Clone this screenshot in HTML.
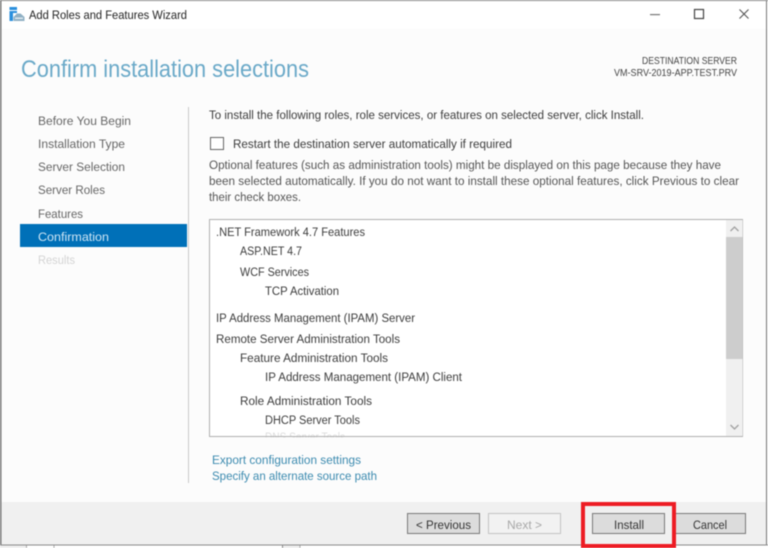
<!DOCTYPE html>
<html><head><meta charset="utf-8"><style>
html,body{margin:0;padding:0;background:#fff;width:768px;height:548px;overflow:hidden}
svg{display:block;position:absolute;left:0;top:0}
text{font-family:"Liberation Sans",sans-serif;font-size:12.3px;fill:#3c3c3c}
svg{filter:blur(.45px)}
</style></head><body>
<svg width="768" height="548" viewBox="0 0 768 548" xmlns="http://www.w3.org/2000/svg">
<rect width="768" height="548" fill="#fcfcfc"/>
<rect x="0" y="0" width="768" height="29" fill="#fff"/>
<rect x="0" y="0" width="768" height="1" fill="#8a8a8a"/>
<rect x="0" y="0" width="1.5" height="545" fill="#777"/>
<rect x="766" y="0" width="1" height="545" fill="#777"/>

<!-- title icon -->
<rect x="9.500" y="7" width="7.500" height="3" fill="#2a8fdc"/>
<rect x="9.500" y="11" width="7.500" height="2" fill="#2a8fdc"/>
<rect x="9.500" y="13" width="3.500" height="8" fill="#2a8fdc"/>
<path d="M13.500 21V17L17 13.500H20.500L24.500 17V21Z" fill="#8fb0c4"/>
<rect x="15" y="17.500" width="8" height="1.500" fill="#dfe8ee"/>
<text x="29" y="19" textLength="158" lengthAdjust="spacingAndGlyphs" style="fill:#222">Add Roles and Features Wizard</text>

<!-- window controls -->
<rect x="650" y="14" width="10" height="1.200" fill="#777"/>
<rect x="694.500" y="9.500" width="9" height="9" fill="none" stroke="#444" stroke-width="1.200"/>
<path d="M739.500 9.500L748.500 18.500M748.500 9.500L739.500 18.500" stroke="#555" stroke-width="1.100" fill="none"/>

<!-- header -->
<text x="21" y="77" textLength="288" lengthAdjust="spacingAndGlyphs" style="font-size:24px;fill:#6aa9c8">Confirm installation selections</text>
<text x="642" y="64" textLength="95" lengthAdjust="spacingAndGlyphs" style="font-size:9.800px;fill:#444">DESTINATION SERVER</text>
<text x="614" y="76" textLength="123" lengthAdjust="spacingAndGlyphs" style="font-size:9.800px;fill:#444">VM-SRV-2019-APP.TEST.PRV</text>

<!-- nav -->
<rect x="20" y="224" width="167" height="23" fill="#0070b8"/>
<text x="38" y="125" textLength="93" lengthAdjust="spacingAndGlyphs" style="fill:#666">Before You Begin</text>
<text x="38" y="148" textLength="87" lengthAdjust="spacingAndGlyphs" style="fill:#666">Installation Type</text>
<text x="38" y="171" textLength="87" lengthAdjust="spacingAndGlyphs" style="fill:#666">Server Selection</text>
<text x="38" y="194" textLength="67" lengthAdjust="spacingAndGlyphs" style="fill:#666">Server Roles</text>
<text x="38" y="218" textLength="45" lengthAdjust="spacingAndGlyphs" style="fill:#666">Features</text>
<text x="38" y="241" textLength="71" lengthAdjust="spacingAndGlyphs" style="fill:#cfe6f5">Confirmation</text>
<text x="38" y="264" textLength="37" lengthAdjust="spacingAndGlyphs" style="fill:#d4d4d4">Results</text>
<rect x="188" y="107" width="1" height="376" fill="#c8c8c8"/>

<!-- main copy -->
<text x="209" y="119" textLength="435" lengthAdjust="spacingAndGlyphs">To install the following roles, role services, or features on selected server, click Install.</text>
<rect x="210.500" y="137.500" width="13" height="12" fill="#fff" stroke="#666" stroke-width="1"/>
<text x="233" y="148" textLength="279" lengthAdjust="spacingAndGlyphs">Restart the destination server automatically if required</text>
<text x="209" y="169" textLength="512" lengthAdjust="spacingAndGlyphs" style="fill:#555">Optional features (such as administration tools) might be displayed on this page because they have</text>
<text x="209" y="185" textLength="530" lengthAdjust="spacingAndGlyphs" style="fill:#555">been selected automatically. If you do not want to install these optional features, click Previous to clear</text>
<text x="209" y="201" textLength="92" lengthAdjust="spacingAndGlyphs" style="fill:#555">their check boxes.</text>

<!-- list box -->
<rect x="209.500" y="219.500" width="533" height="217" fill="#fff" stroke="#b0b0b0" stroke-width="1"/>
<text x="216" y="236" textLength="149" lengthAdjust="spacingAndGlyphs">.NET Framework 4.7 Features</text>
<text x="240" y="255" textLength="62" lengthAdjust="spacingAndGlyphs">ASP.NET 4.7</text>
<text x="240" y="276" textLength="69" lengthAdjust="spacingAndGlyphs">WCF Services</text>
<text x="265" y="295" textLength="74" lengthAdjust="spacingAndGlyphs">TCP Activation</text>
<text x="216" y="322" textLength="199" lengthAdjust="spacingAndGlyphs">IP Address Management (IPAM) Server</text>
<text x="216" y="343" textLength="184" lengthAdjust="spacingAndGlyphs">Remote Server Administration Tools</text>
<text x="240" y="362" textLength="148" lengthAdjust="spacingAndGlyphs">Feature Administration Tools</text>
<text x="265" y="381" textLength="197" lengthAdjust="spacingAndGlyphs">IP Address Management (IPAM) Client</text>
<text x="240" y="405" textLength="132" lengthAdjust="spacingAndGlyphs">Role Administration Tools</text>
<text x="265" y="424" textLength="95" lengthAdjust="spacingAndGlyphs">DHCP Server Tools</text>
<text x="265" y="441" textLength="80" lengthAdjust="spacingAndGlyphs" style="fill:#ddd">DNS Server Tools</text>
<rect x="205" y="437.500" width="545" height="12" fill="#fcfcfc"/>
<rect x="209" y="436" width="534" height="1" fill="#b0b0b0"/>

<!-- scrollbar -->
<rect x="726" y="220" width="16.500" height="216" fill="#f0f0f0"/>
<rect x="726" y="237" width="16.500" height="122" fill="#cdcdcd"/>
<path d="M730.500 231L734.500 227L738.500 231" fill="none" stroke="#a0a0a0" stroke-width="1.300"/>
<path d="M730.500 425L734.500 429L738.500 425" fill="none" stroke="#a0a0a0" stroke-width="1.300"/>

<!-- links -->
<text x="212" y="464" textLength="149" lengthAdjust="spacingAndGlyphs" style="fill:#3b8aaf">Export configuration settings</text>
<text x="212" y="480" textLength="165" lengthAdjust="spacingAndGlyphs" style="fill:#3b8aaf">Specify an alternate source path</text>

<!-- footer -->
<rect x="1.500" y="502" width="764.500" height="43" fill="#f0f0f0"/>
<rect x="0" y="544.500" width="768" height="1" fill="#8a8a8a"/>
<rect x="0" y="545.500" width="768" height="2.500" fill="#fff"/>
<rect x="0" y="545.500" width="26" height="2.500" fill="#eee"/>
<rect x="26" y="545.500" width="1" height="2.500" fill="#aaa"/>
<rect x="53.500" y="545.500" width="1" height="2.500" fill="#aaa"/>
<rect x="282" y="545.500" width="1" height="2.500" fill="#888"/>
<rect x="283" y="545.500" width="16.500" height="2.500" fill="#eee"/>
<rect x="299.500" y="545.500" width="1" height="2.500" fill="#aaa"/>

<!-- buttons -->
<rect x="407.500" y="513.500" width="72" height="20" fill="#dcdcdc" stroke="#7a7a7a"/>
<text x="416" y="529" textLength="55" lengthAdjust="spacingAndGlyphs" style="fill:#333">&lt; Previous</text>
<rect x="488.500" y="513.500" width="72" height="20" fill="#f2f2f2" stroke="#c4c4c4"/>
<text x="507" y="529" textLength="35" lengthAdjust="spacingAndGlyphs" style="fill:#a8a8a8">Next &gt;</text>
<rect x="592.500" y="513.500" width="72" height="20" fill="#dcdcdc" stroke="#7a7a7a"/>
<text x="614" y="529" textLength="30" lengthAdjust="spacingAndGlyphs" style="fill:#333">Install</text>
<rect x="673.500" y="513.500" width="72" height="20" fill="#dcdcdc" stroke="#7a7a7a"/>
<text x="693" y="529" textLength="34" lengthAdjust="spacingAndGlyphs" style="fill:#333">Cancel</text>

<!-- red highlight -->
<rect x="583" y="504" width="91" height="42" fill="none" stroke="#ed1c24" stroke-width="4"/>
</svg>
</body></html>
